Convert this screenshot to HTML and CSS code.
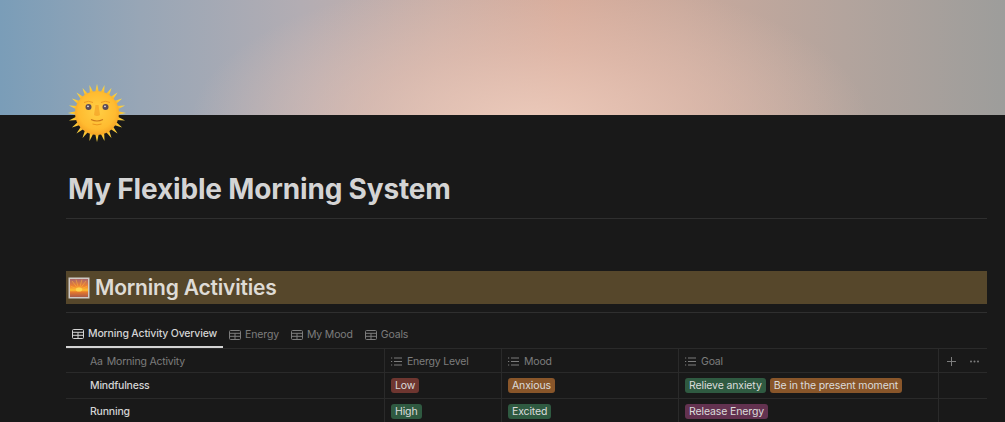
FILE: index.html
```html
<!DOCTYPE html>
<html lang="en">
<head>
<meta charset="utf-8">
<title>My Flexible Morning System</title>
<link rel="stylesheet" href="styles.css">
</head>
<body>
<svg class="defs" width="0" height="0">
  <defs>
    <symbol id="tbl" viewBox="0 0 12 10"><path d="M1.5.5h9a1 1 0 0 1 1 1v7a1 1 0 0 1-1 1h-9a1 1 0 0 1-1-1v-7a1 1 0 0 1 1-1ZM.5 3.3h11M.5 6.3h11M6 3.3v6.2" fill="none" stroke="currentColor" stroke-width="1"/></symbol>
    <symbol id="lst" viewBox="0 0 11 9"><path d="M3 1h8M3 4.5h8M3 8h8" fill="none" stroke="currentColor" stroke-width="1"/><path d="M0 .4h1.2v1.2H0zM0 3.9h1.2v1.2H0zM0 7.4h1.2v1.2H0z" fill="currentColor"/></symbol>
  </defs>
</svg>
<header class="cover"></header>
<svg class="sun" viewBox="0 0 60 60" aria-hidden="true">
  <defs>
    <radialGradient id="face" cx="50%" cy="45%" r="58%"><stop offset="0" stop-color="#ffcf45"/><stop offset=".72" stop-color="#ffbb30"/><stop offset="1" stop-color="#f6a022"/></radialGradient>
    <linearGradient id="rayfill" x1="0" y1="0" x2="0" y2="1"><stop offset="0" stop-color="#ffe04a"/><stop offset="1" stop-color="#f7b024"/></linearGradient>
  </defs>
  <g fill="url(#rayfill)">
    <path id="ray" d="M30 1l2 9h-4z"/>
    <use href="#ray" transform="rotate(15 30 30)"/><use href="#ray" transform="rotate(30 30 30)"/><use href="#ray" transform="rotate(45 30 30)"/><use href="#ray" transform="rotate(60 30 30)"/><use href="#ray" transform="rotate(75 30 30)"/><use href="#ray" transform="rotate(90 30 30)"/><use href="#ray" transform="rotate(105 30 30)"/><use href="#ray" transform="rotate(120 30 30)"/><use href="#ray" transform="rotate(135 30 30)"/><use href="#ray" transform="rotate(150 30 30)"/><use href="#ray" transform="rotate(165 30 30)"/><use href="#ray" transform="rotate(180 30 30)"/><use href="#ray" transform="rotate(195 30 30)"/><use href="#ray" transform="rotate(210 30 30)"/><use href="#ray" transform="rotate(225 30 30)"/><use href="#ray" transform="rotate(240 30 30)"/><use href="#ray" transform="rotate(255 30 30)"/><use href="#ray" transform="rotate(270 30 30)"/><use href="#ray" transform="rotate(285 30 30)"/><use href="#ray" transform="rotate(300 30 30)"/><use href="#ray" transform="rotate(315 30 30)"/><use href="#ray" transform="rotate(330 30 30)"/><use href="#ray" transform="rotate(345 30 30)"/>
  </g>
  <circle cx="30" cy="30" r="22" fill="url(#face)"/>
  <circle cx="21.5" cy="24" r="3" fill="#5b4a55"/><circle cx="38.5" cy="24" r="3" fill="#5b4a55"/>
  <circle cx="21" cy="23.3" r=".9" fill="#e8e4ea"/><circle cx="38" cy="23.3" r=".9" fill="#e8e4ea"/>
  <path d="M17 19.5q4.500-2.500 9 0M34 19.500q4.500-2.500 9 0" stroke="#ea9420" stroke-width=".9" fill="none"/>
  <path d="M28.500 22l-1.500 10q3 2 6 0l-1.500-10" fill="#f0961f" opacity=".55"/>
  <path d="M24 36.500q6 3 12 0" stroke="#c9761a" stroke-width="1.100" fill="none"/>
  <path d="M25.500 41q4.500 1.800 9 0" stroke="#e8901a" stroke-width=".9" fill="none"/>
</svg>
<main class="page">
  <h1 class="title">My Flexible Morning System</h1>
  <h2 class="band">
    <svg class="sunrise" viewBox="0 0 22 22" aria-hidden="true">
      <defs>
        <linearGradient id="sky" x1="0" y1="0" x2="0" y2="1"><stop offset="0" stop-color="#a8666c"/><stop offset=".4" stop-color="#f0812f"/><stop offset=".62" stop-color="#fbc02f"/><stop offset=".72" stop-color="#e87a2c"/><stop offset="1" stop-color="#a85a48"/></linearGradient>
      </defs>
      <rect x=".5" y=".5" width="21" height="21" fill="#cfcac6"/>
      <rect x="2" y="2" width="18" height="18" fill="url(#sky)"/>
      <path d="M11 13L4 4M11 13L8 2.500M11 13L14 2.500M11 13L18 4M11 13L2.500 9M11 13L19.500 9" stroke="#f9b53c" stroke-width=".8" opacity=".7"/>
      <ellipse cx="11" cy="12.500" rx="3.200" ry="2" fill="#fcd44d"/>
    </svg>
    <span>Morning Activities</span>
  </h2>
  <nav class="tabs">
    <a class="tab active"><svg class="ic-t"><use href="#tbl"/></svg>Morning Activity Overview</a>
    <a class="tab"><svg class="ic-t"><use href="#tbl"/></svg>Energy</a>
    <a class="tab"><svg class="ic-t"><use href="#tbl"/></svg>My Mood</a>
    <a class="tab"><svg class="ic-t"><use href="#tbl"/></svg>Goals</a>
  </nav>
  <div class="table">
    <div class="row head">
      <div class="cell c1"><span class="aa">Aa</span>Morning Activity</div>
      <div class="cell c2"><svg class="ic-l"><use href="#lst"/></svg>Energy Level</div>
      <div class="cell c3"><svg class="ic-l"><use href="#lst"/></svg>Mood</div>
      <div class="cell c4"><svg class="ic-l"><use href="#lst"/></svg>Goal</div>
      <div class="cell c5">
        <svg class="plus" viewBox="0 0 9 9"><path d="M4.500 0v9M0 4.500h9" stroke="currentColor" stroke-width="1"/></svg>
        <svg class="dots" viewBox="0 0 9 3"><circle cx="1" cy="1.500" r="1" fill="currentColor"/><circle cx="4.500" cy="1.500" r="1" fill="currentColor"/><circle cx="8" cy="1.500" r="1" fill="currentColor"/></svg>
      </div>
    </div>
    <div class="row">
      <div class="cell c1 name">Mindfulness</div>
      <div class="cell c2"><span class="tag red">Low</span></div>
      <div class="cell c3"><span class="tag orange">Anxious</span></div>
      <div class="cell c4"><span class="tag green">Relieve anxiety</span><span class="tag orange">Be in the present moment</span></div>
      <div class="cell c5"></div>
    </div>
    <div class="row">
      <div class="cell c1 name">Running</div>
      <div class="cell c2"><span class="tag green">High</span></div>
      <div class="cell c3"><span class="tag green">Excited</span></div>
      <div class="cell c4"><span class="tag purple">Release Energy</span></div>
      <div class="cell c5"></div>
    </div>
  </div>
</main>
</body>
</html>
```
FILE: styles.css
```css
* { box-sizing: border-box; }
html, body { margin: 0; height: 422px; overflow: hidden; }
body {
  background: #191919;
  color: #d4d4d4;
  font-family: Inter, "Liberation Sans", sans-serif;
  position: relative;
}
.defs { position: absolute; }
.cover {
  height: 115px;
  background:
    radial-gradient(ellipse 340px 150px at 530px 125px, rgba(238,205,190,.9) 0%, rgba(232,195,180,.55) 50%, rgba(225,185,170,0) 100%),
    linear-gradient(90deg, #7a9db8 0%, #98a6b6 14%, #b3adb3 30%, #c9aea6 44%, #d5a998 56%, #c9a99c 68%, #b3a49d 84%, #9d9d9b 100%);
}
.sun { position: absolute; left: 67px; top: 83px; width: 60px; height: 60px; }
.page { padding: 0 18px 0 66px; }
.title {
  margin: 0;
  padding: 56px 0 12px 2px;
  height: 104px;
  font-size: 28px;
  line-height: 36px;
  font-weight: 700;
  letter-spacing: -.17px;
  color: #d4d4d4;
  border-bottom: 1px solid #2f2f2f;
}
.band {
  margin: 52px 0 0;
  height: 33px;
  background: #56472b;
  display: flex;
  align-items: center;
  gap: 5px;
  padding-left: 2px;
  font-size: 21px;
  font-weight: 600;
  letter-spacing: -.2px;
  color: #dedbd5;
}
.sunrise { width: 22px; height: 22px; flex: none; }
.tabs {
  margin-top: 8px;
  border-top: 1px solid #2f2f2f;
  border-bottom: 1px solid #2a2a2a;
  height: 37px;
  display: flex;
  align-items: stretch;
  padding-top: 8px;
}
.tab {
  display: flex;
  align-items: center;
  padding: 0 6px;
  font-size: 10.5px;
  letter-spacing: -.15px;
  color: #7d7d7d;
  white-space: nowrap;
  height: 27px;
}
.tab.active { color: #d4d4d4; border-bottom: 2px solid #d4d4d4; font-weight: 500; letter-spacing: -.17px; }
.ic-t { width: 12px; height: 10px; margin-right: 4px; }
.table { font-size: 10.5px; letter-spacing: -.2px; }
.row { display: flex; border-bottom: 1px solid #2a2a2a; height: 26px; }
.row.head { color: #7d7d7d; height: 24px; }
.row.head .cell { padding-top: 1px; }
.cell { display: flex; align-items: center; border-right: 1px solid #2a2a2a; padding-left: 6px; gap: 4px; }
.c1 { width: 319px; padding-left: 24px; }
.c2 { width: 117px; }
.c3 { width: 177px; }
.c4 { width: 260px; }
.c5 { flex: 1; border-right: 0; }
.ic-l { width: 11px; height: 9px; margin-right: 1px; }
.name { color: #d4d4d4; font-weight: 500; padding-bottom: 1px; }
.plus { width: 9px; height: 9px; margin-left: 2px; }
.dots { width: 9px; height: 3px; margin-left: 10px; }
.tag {
  display: inline-flex;
  align-items: center;
  height: 15px;
  padding: 0 4px;
  border-radius: 3px;
  color: #dcdcdc;
  letter-spacing: -.125px;
  white-space: nowrap;
}
.red { background: #6e3630; }
.orange { background: #89562a; }
.green { background: #2f5a41; }
.purple { background: #633250; }
```
